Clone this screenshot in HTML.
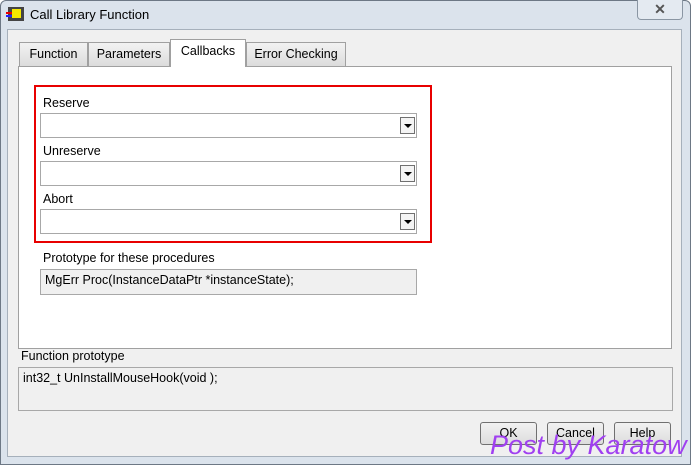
<!DOCTYPE html>
<html><head><style>
body{margin:0;width:691px;height:465px;overflow:hidden;font-family:"Liberation Sans",sans-serif;font-size:12px;color:#000;}
.win{position:absolute;left:0;top:0;width:689px;height:463px;border:1px solid #6d7885;border-radius:6px 6px 0 0;background:#dbe3ec;}
.client{position:absolute;left:7px;top:29px;width:673px;height:426px;background:#f0f0f0;border:1px solid #a6b0bb;}
.a{position:absolute;}
.tab{position:absolute;top:42px;height:24px;background:linear-gradient(#f2f2f2,#dcdcdc);border:1px solid #a0a0a0;border-bottom:none;box-sizing:border-box;text-align:center;line-height:22px;font-size:12.5px;}
.combo{position:absolute;left:40px;width:377px;height:25px;background:#fff;border:1px solid #a8a8a8;box-sizing:border-box;}
.combo i{position:absolute;right:1px;top:3px;width:15px;height:17px;border:1px solid #707070;box-sizing:border-box;background:#f4f4f4;}
.combo i:after{content:"";position:absolute;left:3px;top:6px;border-left:4px solid transparent;border-right:4px solid transparent;border-top:4px solid #000;}
.lbl{position:absolute;font-size:12.5px;}
.btn{position:absolute;top:422px;width:57px;height:23px;border:1px solid #707070;border-radius:3px;background:linear-gradient(#f2f2f2,#dddddd);box-sizing:border-box;text-align:center;line-height:21px;font-size:12.5px;}
</style></head><body>
<div class="win"></div>
<div class="a" style="left:8px;top:7px;width:16px;height:14px;background:#444;"><div style="position:absolute;left:4px;top:2px;width:9px;height:9px;background:#f3e800"></div><div style="position:absolute;left:-2px;top:5px;width:6px;height:2px;background:#e00"></div><div style="position:absolute;left:-2px;top:8px;width:6px;height:2px;background:#22f"></div></div>
<div class="a" style="left:30px;top:7px;font-size:13px;">Call Library Function</div>
<div class="a" style="left:637px;top:0;width:44px;height:19px;border:1px solid #8a96a3;border-top:none;border-radius:0 0 4px 4px;background:#e4eaf1;text-align:center;font-size:14px;font-weight:bold;color:#555;line-height:18px;">✕</div>
<div class="client"></div>
<div class="tab" style="left:19px;width:69px;">Function</div>
<div class="tab" style="left:88px;width:82px;">Parameters</div>
<div class="tab" style="left:246px;width:100px;">Error Checking</div>
<div class="a" style="left:18px;top:66px;width:654px;height:283px;background:#fff;border:1px solid #a0a0a0;box-sizing:border-box;"></div>
<div class="tab" style="left:170px;top:39px;width:76px;height:28px;background:#fff;z-index:2;">Callbacks</div>
<div class="a" style="left:34px;top:85px;width:398px;height:158px;border:2px solid #e80000;box-sizing:border-box;"></div>
<div class="lbl" style="left:43px;top:96px;">Reserve</div>
<div class="combo" style="top:113px;"><i></i></div>
<div class="lbl" style="left:43px;top:144px;">Unreserve</div>
<div class="combo" style="top:161px;"><i></i></div>
<div class="lbl" style="left:43px;top:192px;">Abort</div>
<div class="combo" style="top:209px;"><i></i></div>
<div class="lbl" style="left:43px;top:251px;">Prototype for these procedures</div>
<div class="a" style="left:40px;top:269px;width:377px;height:26px;background:#f0f0f0;border:1px solid #a8a8a8;box-sizing:border-box;padding:3px 4px;font-size:12.5px;">MgErr Proc(InstanceDataPtr *instanceState);</div>
<div class="lbl" style="left:21px;top:349px;">Function prototype</div>
<div class="a" style="left:18px;top:367px;width:655px;height:44px;background:#f0f0f0;border:1px solid #a8a8a8;box-sizing:border-box;padding:3px 4px;font-size:12.5px;">int32_t UnInstallMouseHook(void );</div>
<div class="btn" style="left:480px;">OK</div>
<div class="btn" style="left:547px;">Cancel</div>
<div class="btn" style="left:614px;">Help</div>
<div class="a" style="left:490px;top:430px;font-size:27px;font-style:italic;color:#a040f0;white-space:nowrap;">Post by Karatow</div>
</body></html>
